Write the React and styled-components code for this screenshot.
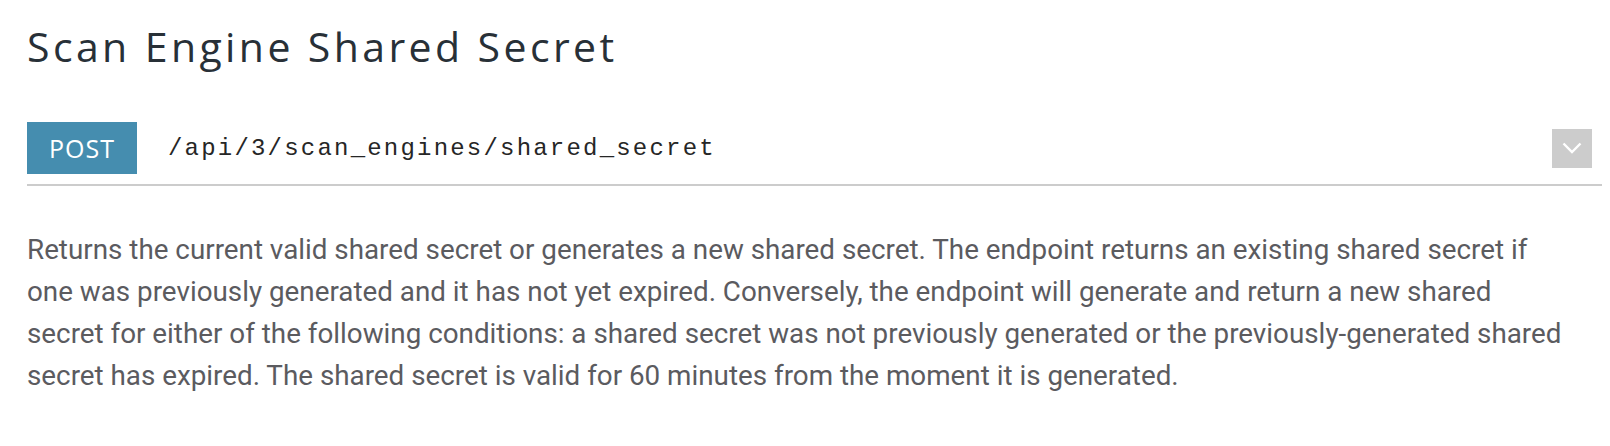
import styled, { createGlobalStyle } from 'styled-components';

const GlobalStyle = createGlobalStyle`
  html, body {
    margin: 0;
    padding: 0;
    background: #ffffff;
  }
`;

const Page = styled.div`
  padding: 22px 8px 0 27px;
`;

const Title = styled.h1`
  margin: 0 0 51px;
  font-family: 'Open Sans', 'Lato', sans-serif;
  font-weight: 400;
  font-size: 41px;
  line-height: 49px;
  letter-spacing: 3.4px;
  color: #283037;
`;

const EndpointBar = styled.div`
  display: flex;
  align-items: center;
  gap: 31px;
  padding-bottom: 10px;
  border-bottom: 2px solid #cccccc;
`;

const Method = styled.span`
  display: flex;
  align-items: center;
  justify-content: center;
  width: 110px;
  height: 52px;
  background: #458daf;
  color: #ffffff;
  font-family: 'Open Sans', 'Lato', sans-serif;
  font-size: 25px;
  letter-spacing: 1px;
`;

const Path = styled.code`
  flex: 1;
  font-family: 'Liberation Mono', 'Courier New', monospace;
  font-size: 24px;
  letter-spacing: 2.2px;
  color: #262626;
`;

const Toggle = styled.button`
  display: flex;
  align-items: center;
  justify-content: center;
  width: 40px;
  height: 39px;
  margin-right: 10px;
  padding: 0;
  border: none;
  background: #cccccc;
  cursor: pointer;
`;

const Description = styled.p`
  margin: 43px 0 0;
  max-width: 1573px;
  font-family: 'Roboto', sans-serif;
  font-size: 27.8px;
  line-height: 42px;
  color: #5b5b5f;
`;

// the original wraps a little wider than Roboto does, so keep its line ends
const descriptionLines = [
  'Returns the current valid shared secret or generates a new shared secret. The endpoint returns an existing shared secret if',
  'one was previously generated and it has not yet expired. Conversely, the endpoint will generate and return a new shared',
  'secret for either of the following conditions: a shared secret was not previously generated or the previously-generated shared',
  'secret has expired. The shared secret is valid for 60 minutes from the moment it is generated.',
];

export default function App() {
  return (
    <>
      <GlobalStyle />
      <Page>
        <Title>Scan Engine Shared Secret</Title>
        <EndpointBar>
          <Method>POST</Method>
          <Path>/api/3/scan_engines/shared_secret</Path>
          <Toggle aria-label="Expand">
            <svg width="20" height="12" viewBox="0 0 20 12" fill="none">
              <path d="M1.5 1.5l8.5 8.5 8.5-8.5" stroke="#ffffff" strokeWidth="2.4" />
            </svg>
          </Toggle>
        </EndpointBar>
        <Description>
          {descriptionLines.map((line, i) => (
            <span key={i}>
              {line}
              {i < descriptionLines.length - 1 && <br />}
            </span>
          ))}
        </Description>
      </Page>
    </>
  );
}
